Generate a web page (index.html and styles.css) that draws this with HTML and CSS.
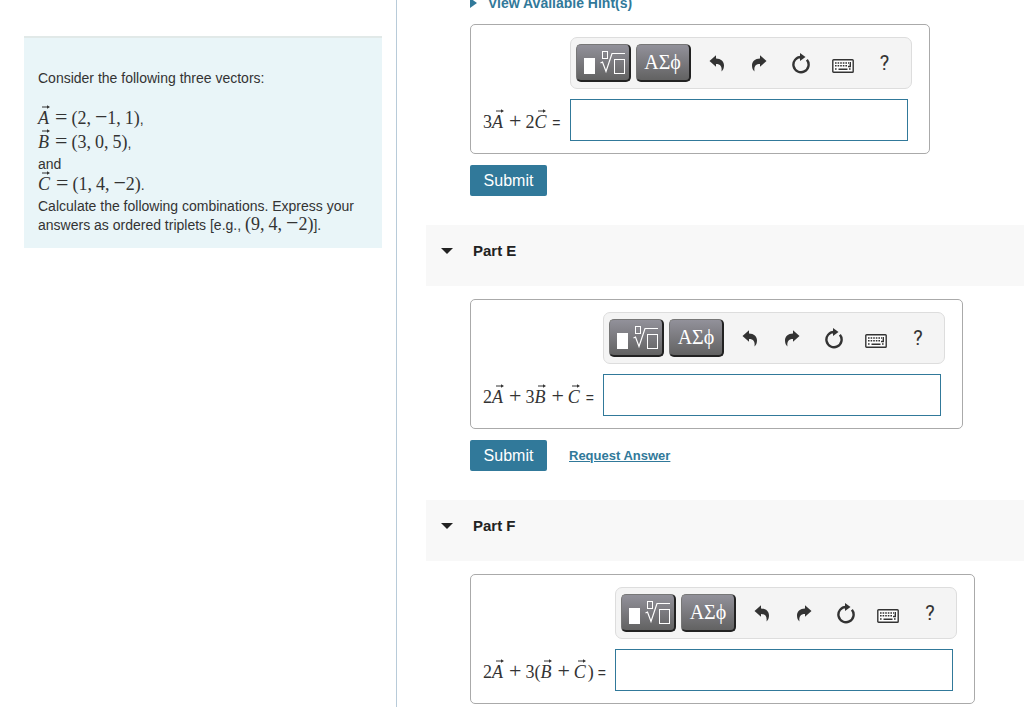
FILE: index.html
```html
<!DOCTYPE html>
<html lang="en">
<head>
    <meta charset="UTF-8">
    <meta name="viewport" content="width=device-width, initial-scale=1.0">
    <title>Vector Combinations</title>
    <link rel="stylesheet" href="styles.css">
</head>
<body>
    <svg class="symbols" aria-hidden="true">
        <symbol id="arrow" viewBox="0 0 8 4">
            <path d="M0 2H6" stroke="currentColor" stroke-width="1"/>
            <path d="M5 0.2L8 2L5 3.8Z" fill="currentColor"/>
        </symbol>
        <symbol id="template" viewBox="0 0 42 26">
            <rect x="0" y="8" width="11" height="16" fill="#fff"/>
            <rect x="18.5" y="1.5" width="5" height="7" fill="none" stroke="#fff"/>
            <path d="M16.5 13L18.5 12L22 21.5L28 3.5H41" fill="none" stroke="#fff" stroke-width="1.2"/>
            <rect x="30.5" y="9.5" width="10" height="14" fill="none" stroke="#fff"/>
        </symbol>
        <symbol id="undo" viewBox="0 0 16 17">
            <path d="M0.5 6L7 0.3V3.4C12 3.5 15 6.2 15 10.5C15 13 14.2 15 12.5 16.5C13.2 11.5 11.5 9 7 9V11.8Z" fill="currentColor"/>
        </symbol>
        <symbol id="redo" viewBox="0 0 16 17">
            <path d="M15.5 6L9 0.3V3.4C4 3.5 1 6.2 1 10.5C1 13 1.8 15 3.5 16.5C2.8 11.5 4.5 9 9 9V11.8Z" fill="currentColor"/>
        </symbol>
        <symbol id="reset" viewBox="0 0 20 21">
            <path d="M10 4A7.6 7.6 0 1 0 15.9 6.8" fill="none" stroke="currentColor" stroke-width="2.4"/>
            <path d="M9 0L14.5 4L9 8Z" fill="currentColor"/>
        </symbol>
        <symbol id="keyboard" viewBox="0 0 22 14">
            <rect x="0.8" y="0.8" width="20.4" height="12.4" rx="0.8" fill="#fff" stroke="currentColor" stroke-width="1.4"/>
            <path d="M3 4H17M3 6.8H16M3 10H5M17 10H19" stroke="currentColor" stroke-width="1.5" stroke-dasharray="1.6 1"/>
            <path d="M6.5 10.2H15.5M18.3 3V7.5H16" fill="none" stroke="currentColor" stroke-width="1.4"/>
        </symbol>
    </svg>

    <div class="page">
        <aside class="sidebar">
            <div class="problem">
                <p class="intro">Consider the following three vectors:</p>
                <p class="vector"><span class="math"><i class="vec">A<svg><use href="#arrow"/></svg></i><span class="op">=</span>(2,<span class="thin"></span><span class="sign">−</span>1,<span class="thin"></span>1)</span>,</p>
                <p class="vector"><span class="math"><i class="vec">B<svg><use href="#arrow"/></svg></i><span class="op">=</span>(3,<span class="thin"></span>0,<span class="thin"></span>5)</span>,</p>
                <p>and</p>
                <p class="vector"><span class="math"><i class="vec">C<svg><use href="#arrow"/></svg></i><span class="op">=</span>(1,<span class="thin"></span>4,<span class="thin"></span><span class="sign">−</span>2)</span>.</p>
                <p>Calculate the following combinations. Express your answers as ordered triplets [e.g., <span class="math">(9,<span class="thin"></span>4,<span class="thin"></span><span class="sign">−</span>2)</span>].</p>
            </div>
        </aside>

        <main class="parts">
            <section class="part">
                <a class="hints" href="#"><span class="hint-arrow"></span>View Available Hint(s)</a>
                <div class="answer">
                    <label for="answerD"><span class="math">3<i class="vec">A<svg><use href="#arrow"/></svg></i><span class="op">+</span>2<i class="vec">C<svg><use href="#arrow"/></svg></i></span> =</label>
                    <div class="editor">
                        <div class="toolbar">
                            <button type="button" class="key" aria-label="Templates"><svg><use href="#template"/></svg></button>
                            <button type="button" class="key">ΑΣϕ</button>
                            <button type="button" class="tool" aria-label="Undo"><svg width="16" height="17"><use href="#undo"/></svg></button>
                            <button type="button" class="tool" aria-label="Redo"><svg width="16" height="17"><use href="#redo"/></svg></button>
                            <button type="button" class="tool" aria-label="Reset"><svg width="20" height="21"><use href="#reset"/></svg></button>
                            <button type="button" class="tool keyboard" aria-label="Keyboard shortcuts"><svg width="22" height="14"><use href="#keyboard"/></svg></button>
                            <button type="button" class="tool">?</button>
                        </div>
                        <input type="text" id="answerD">
                    </div>
                </div>
                <div class="actions">
                    <button type="submit" class="submit">Submit</button>
                </div>
            </section>

            <section class="part">
                <h2><span class="caret"></span>Part E</h2>
                <div class="answer">
                    <label for="answerE"><span class="math">2<i class="vec">A<svg><use href="#arrow"/></svg></i><span class="op">+</span>3<i class="vec">B<svg><use href="#arrow"/></svg></i><span class="op">+</span><i class="vec">C<svg><use href="#arrow"/></svg></i></span> =</label>
                    <div class="editor">
                        <div class="toolbar">
                            <button type="button" class="key" aria-label="Templates"><svg><use href="#template"/></svg></button>
                            <button type="button" class="key">ΑΣϕ</button>
                            <button type="button" class="tool" aria-label="Undo"><svg width="16" height="17"><use href="#undo"/></svg></button>
                            <button type="button" class="tool" aria-label="Redo"><svg width="16" height="17"><use href="#redo"/></svg></button>
                            <button type="button" class="tool" aria-label="Reset"><svg width="20" height="21"><use href="#reset"/></svg></button>
                            <button type="button" class="tool keyboard" aria-label="Keyboard shortcuts"><svg width="22" height="14"><use href="#keyboard"/></svg></button>
                            <button type="button" class="tool">?</button>
                        </div>
                        <input type="text" id="answerE">
                    </div>
                </div>
                <div class="actions">
                    <button type="submit" class="submit">Submit</button>
                    <a href="#">Request Answer</a>
                </div>
            </section>

            <section class="part">
                <h2><span class="caret"></span>Part F</h2>
                <div class="answer">
                    <label for="answerF"><span class="math">2<i class="vec">A<svg><use href="#arrow"/></svg></i><span class="op">+</span>3(<i class="vec">B<svg><use href="#arrow"/></svg></i><span class="op">+</span><i class="vec">C<svg><use href="#arrow"/></svg></i>)</span> =</label>
                    <div class="editor">
                        <div class="toolbar">
                            <button type="button" class="key" aria-label="Templates"><svg><use href="#template"/></svg></button>
                            <button type="button" class="key">ΑΣϕ</button>
                            <button type="button" class="tool" aria-label="Undo"><svg width="16" height="17"><use href="#undo"/></svg></button>
                            <button type="button" class="tool" aria-label="Redo"><svg width="16" height="17"><use href="#redo"/></svg></button>
                            <button type="button" class="tool" aria-label="Reset"><svg width="20" height="21"><use href="#reset"/></svg></button>
                            <button type="button" class="tool keyboard" aria-label="Keyboard shortcuts"><svg width="22" height="14"><use href="#keyboard"/></svg></button>
                            <button type="button" class="tool">?</button>
                        </div>
                        <input type="text" id="answerF">
                    </div>
                </div>
            </section>
        </main>
    </div>
</body>
</html>
```

FILE: styles.css
```css
* {
    box-sizing: border-box;
}

body {
    margin: 0;
    background-color: #fff;
    color: #333;
    font-family: "Liberation Sans", Arial, sans-serif;
    font-size: 14px;
    line-height: 18px;
}

.symbols {
    display: none;
}

.page {
    display: grid;
    grid-template-columns: 397px 1fr;
    min-height: 100vh;
}

/* problem statement */

.sidebar {
    padding: 36px 14px 0 24px;
    border-right: 1px solid #b8cbd9;
}

.problem {
    padding: 31px 14px 14px;
    border-top: 2px solid #e1e9e8;
    background-color: #e9f5f8;
}

.problem p {
    margin: 0;
}

.problem .intro {
    margin-bottom: 20px;
}

.problem .vector {
    height: 24px;
    line-height: 24px;
}

/* maths */

.math {
    font-family: "Liberation Serif", "Times New Roman", serif;
    font-size: 18px;
    line-height: 16px;
    white-space: nowrap;
}

.vec {
    position: relative;
    display: inline-block;
    padding-right: 2px;
}

.vec svg {
    position: absolute;
    top: -5px;
    left: 4px;
    width: 8px;
    height: 4px;
}

.op,
.sign {
    font-size: 22px;
    line-height: 16px;
}

.op {
    margin: 0 4px;
}

.thin {
    margin-right: 4px;
}

/* parts */

.parts {
    min-width: 0;
    padding-left: 29px;
    overflow: hidden;
}

.hints {
    display: block;
    margin: -6px 0 12px 44px;
    color: #31799a;
    font-weight: bold;
    text-decoration: none;
}

.hint-arrow {
    display: inline-block;
    margin-right: 11px;
    border-left: 7px solid #31799a;
    border-top: 5px solid transparent;
    border-bottom: 5px solid transparent;
}

h2 {
    display: flex;
    align-items: center;
    height: 61px;
    margin: 0 0 13px;
    padding: 0 15px 9px;
    background-color: #f8f8f8;
    color: #222;
    font-size: 15px;
}

.caret {
    margin-right: 20px;
    border-top: 6px solid #222;
    border-left: 6px solid transparent;
    border-right: 6px solid transparent;
}

.answer {
    display: flex;
    align-items: flex-end;
    gap: 9px;
    width: fit-content;
    height: 130px;
    margin-left: 44px;
    padding: 12px 17px 12px 12px;
    border: 1px solid #aaa;
    border-radius: 5px;
}

.answer label {
    line-height: 36px;
    white-space: nowrap;
}

.toolbar {
    display: flex;
    align-items: center;
    width: 342px;
    height: 52px;
    margin-bottom: 10px;
    padding: 0 5px;
    border: 1px solid #ddd;
    border-radius: 7px;
    background-color: #f4f4f4;
}

.toolbar button {
    display: flex;
    align-items: center;
    justify-content: center;
    padding: 0;
    cursor: pointer;
}

.key {
    width: 55px;
    height: 38px;
    margin-right: 5px;
    border: 1px solid #777;
    border-right: 2px solid #222;
    border-bottom: 2px solid #222;
    border-radius: 5px;
    background: linear-gradient(#92919a, #626262);
    color: #fff;
    font-family: "Liberation Serif", serif;
    font-size: 20px;
}

.key svg {
    width: 42px;
    height: 26px;
    margin-left: 4px;
}

.tool {
    width: 42px;
    height: 38px;
    border: none;
    background: none;
    color: #333;
    font-family: Roboto, sans-serif;
    font-size: 20px;
}

.toolbar .keyboard {
    padding-top: 5px;
}

.editor input {
    display: block;
    width: 338px;
    height: 42px;
    padding: 0 8px;
    border: 1px solid #31799a;
    background-color: #fff;
    font-size: 16px;
}

.actions {
    display: flex;
    align-items: center;
    gap: 22px;
    margin: 11px 0 29px 44px;
}

.submit {
    width: 77px;
    height: 31px;
    padding: 0;
    border: none;
    border-radius: 2px;
    background-color: #31799a;
    color: #fff;
    font-family: inherit;
    font-size: 16px;
    cursor: pointer;
}

.actions a {
    color: #31799a;
    font-size: 13px;
    font-weight: bold;
}
```
